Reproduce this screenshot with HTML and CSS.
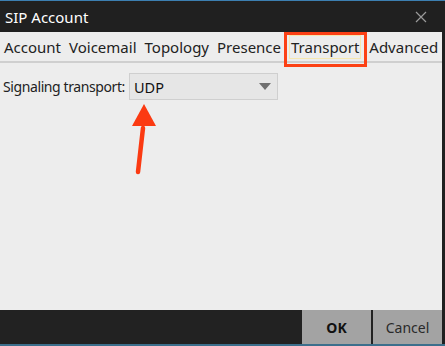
FILE: index.html
```html
<!DOCTYPE html>
<html>
<head>
<meta charset="utf-8">
<link rel="stylesheet" href="styles.css">
</head>
<body>
<div class="window">
  <div class="titlebar">
    <span class="title">SIP Account</span>
    <svg class="close" width="12" height="12" viewBox="0 0 12 12"><path d="M1 1L11 11M11 1L1 11" stroke="#9a9a9a" stroke-width="1.2"/></svg>
  </div>
  <div class="main">
    <div class="tabs">
      <span class="tab">Account</span>
      <span class="tab">Voicemail</span>
      <span class="tab">Topology</span>
      <span class="tab">Presence</span>
      <span class="tab active"><span class="focus">Transport</span></span>
      <span class="tab">Advanced</span>
    </div>
    <div class="content">
      <div class="row">
        <span class="label">Signaling transport:</span>
        <div class="select"><span>UDP</span><svg width="12" height="7" viewBox="0 0 12 7"><path d="M0 0H12L6 7Z" fill="#6f6f6f"/></svg></div>
      </div>
      <svg class="arrow" width="40" height="80" viewBox="0 0 40 80"><path d="M9 68L14 24" stroke="#fb3a12" stroke-width="4.5" stroke-linecap="round"/><path d="M15 0L27 22H3Z" fill="#fb3a12"/></svg>
    </div>
    <div class="footer">
      <button class="btn ok">OK</button>
      <button class="btn">Cancel</button>
    </div>
  </div>
</div>
</body>
</html>
```
FILE: styles.css
```css
html, body { margin: 0; padding: 0; }
body {
  width: 445px; height: 346px; overflow: hidden;
  font-family: "Noto Sans", "Open Sans", sans-serif;
  background: #2a2a2a;
}
.window {
  width: 445px; height: 346px; box-sizing: border-box;
  border-top: 1px solid #3c7fb1;
  border-bottom: 2px solid #3c6f8c;
  display: flex; flex-direction: column;
  background: #202020;
}
.titlebar {
  height: 31px; flex: none;
  background: #202020;
  display: flex; align-items: center; justify-content: space-between;
  padding: 0 18px 0 5px;
}
.title { color: #ffffff; font-size: 15px; }
.close { display: block; }
.main {
  flex: 1; display: flex; flex-direction: column;
  margin-right: 3px;
  background: #ededed;
}
.tabs {
  display: flex; height: 31px; align-items: flex-end;
  border-bottom: 2px solid #cfcfcf;
  padding-left: 0;
  box-sizing: border-box;
}
.tab {
  font-size: 15px; color: #222; padding: 0 4px 3px 4px; line-height: 22px;
  position: relative; white-space: nowrap;
}
.tab.active { padding: 0 3px 2px 3px; margin: 0 1px; }
.tab.active::after {
  content: ""; position: absolute;
  left: -2px; right: -3px; top: -3px; bottom: -6px;
  border: 3px solid #fc4115;
}
.focus { border: 1px solid #f6e7b0; padding: 0 1px; display: inline-block; line-height: 22px; }
.content { flex: 1; padding: 10px 3px 0 3px; position: relative; }
.row { display: flex; align-items: center; gap: 4px; }
.label { font-size: 14px; color: #222; letter-spacing: -0.4px; }
.select {
  width: 149px; height: 27px; box-sizing: border-box;
  border: 1px solid #cfcfcf; background: #e6e6e6;
  display: flex; align-items: center; justify-content: space-between;
  padding: 0 6px 0 4px; font-size: 14.5px; color: #111;
}
.arrow { position: absolute; left: 129px; top: 41px; }
.footer {
  height: 34px; flex: none; background: #222;
  display: flex; justify-content: flex-end; gap: 2px;
}
.btn {
  width: 69px; height: 34px; border: none; background: #a3a3a3;
  font-family: inherit; font-size: 14px; color: #2a2a2a; padding: 0;
}
.btn.ok { font-weight: bold; color: #111; }
```
